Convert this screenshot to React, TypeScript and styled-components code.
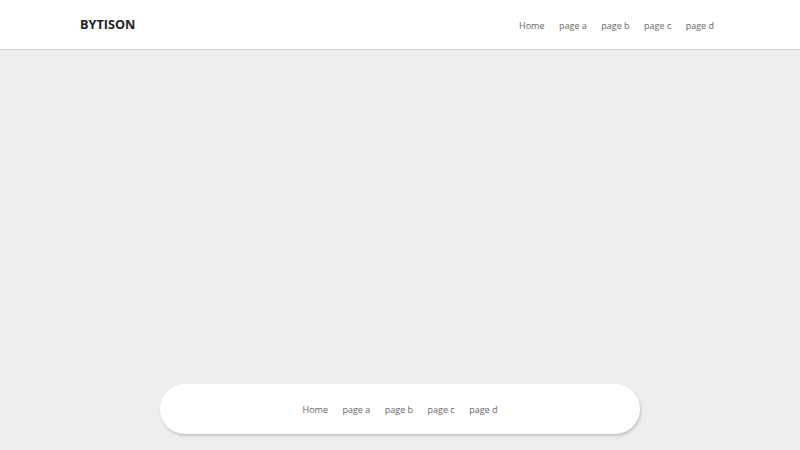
import React from 'react'
import styled, { createGlobalStyle } from 'styled-components'

const GlobalStyle = createGlobalStyle`
  html, body {
    margin: 0;
    padding: 0;
    height: 100%;
  }
  body {
    background: #eeeeee;
    font-family: 'Open Sans', 'Noto Sans', sans-serif;
  }
  #root {
    height: 100%;
  }
`

const links = ['Home', 'page a', 'page b', 'page c', 'page d']

const Page = styled.div`
  display: flex;
  flex-direction: column;
  height: 100vh;
`

const Header = styled.header`
  height: 49px;
  background: #ffffff;
  border-bottom: 1px solid #d2d2d2;
  flex-shrink: 0;
`

const HeaderInner = styled.div`
  width: 640px;
  height: 100%;
  margin: 0 auto;
  display: flex;
  align-items: center;
  justify-content: space-between;
`

const Logo = styled.div`
  font-size: 12.7px;
  font-weight: 700;
  color: #222222;
  margin-top: -1px;
`

const Nav = styled.nav`
  display: flex;
  align-items: center;
  gap: 14.5px;
  margin-right: 6px;
  margin-top: 1px;
`

const NavLink = styled.a`
  font-size: 9px;
  color: #666666;
  text-decoration: none;
  cursor: pointer;
`

const Main = styled.main`
  flex: 1;
`

const Footer = styled.footer`
  width: 480px;
  height: 50px;
  margin: 0 auto 16px;
  background: #ffffff;
  border-radius: 25px;
  box-shadow: 1px 2px 3px rgba(0, 0, 0, 0.18);
  display: flex;
  align-items: center;
  justify-content: center;
  flex-shrink: 0;
`

const FooterNav = styled(Nav)`
  margin: 0;
`

export default function App() {
  return (
    <>
      <GlobalStyle />
      <Page>
        <Header>
          <HeaderInner>
            <Logo>BYTISON</Logo>
            <Nav>
              {links.map((l) => (
                <NavLink key={l}>{l}</NavLink>
              ))}
            </Nav>
          </HeaderInner>
        </Header>
        <Main />
        <Footer>
          <FooterNav>
            {links.map((l) => (
              <NavLink key={l}>{l}</NavLink>
            ))}
          </FooterNav>
        </Footer>
      </Page>
    </>
  )
}
